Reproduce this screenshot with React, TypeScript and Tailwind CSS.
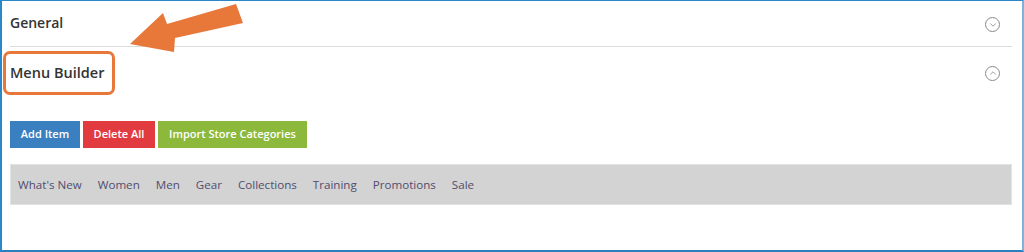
import { ChevronDown, ChevronUp } from 'lucide-react'

const menuItems = ['What\'s New', 'Women', 'Men', 'Gear', 'Collections', 'Training', 'Promotions', 'Sale']

function CircleChevron({ up }: { up?: boolean }) {
  return (
    <span className="flex h-[15px] w-[15px] items-center justify-center rounded-full border border-[#8a8a8a] text-[#8a8a8a]">
      {up ? <ChevronUp size={10} strokeWidth={2} /> : <ChevronDown size={10} strokeWidth={2} />}
    </span>
  )
}

export default function App() {
  return (
    <div className="relative h-[252px] w-[1024px] overflow-hidden bg-white font-['Open_Sans',sans-serif]">
      <div className="h-[252px] border-t border-l-2 border-b-2 border-r-2 border-t-[#2a87c8] border-l-[#2a87c8] border-b-[#2a7fbf] border-r-[#7ab4dc] pl-2 pr-[10px]">
        <div className="flex h-[46px] items-center justify-between border-b border-[#dcdcdc]">
          <h2 className="-mt-[2px] text-[14px] font-semibold text-[#333]">General</h2>
          <span className="mr-[12px] mt-[2px]">
            <CircleChevron />
          </span>
        </div>

        <div className="flex h-[50px] items-center justify-between">
          <div className="-ml-[7px] mt-[2px] flex h-[44px] items-center rounded-[7px] border-[3px] border-[#e8773a] pl-[4px] pr-[8px]">
            <h2 className="-mt-[1px] text-[14.5px] font-semibold text-[#333]">Menu Builder</h2>
          </div>
          <span className="mr-[12px] mt-[2px]">
            <CircleChevron up />
          </span>
        </div>

        <div className="mt-[24px] flex gap-[3px]">
          <button className="h-[27px] w-[70px] bg-[#3a7fbf] text-[11px] font-semibold text-white">Add Item</button>
          <button className="h-[27px] w-[72px] bg-[#e23b3f] text-[11px] font-semibold text-white">Delete All</button>
          <button className="h-[27px] w-[149px] bg-[#8cb83c] text-[11px] font-semibold text-white">Import Store Categories</button>
        </div>

        <div className="mt-[16px] flex h-[41px] items-center gap-[16px] border border-[#e2e2e2] bg-[#d3d3d3] pl-[7px]">
          {menuItems.map((item) => (
            <span key={item} className="text-[11.6px] text-[#514d6e]">
              {item}
            </span>
          ))}
        </div>
      </div>

      <svg className="absolute left-0 top-0" width="260" height="60" viewBox="0 0 260 60">
        <polygon
          points="130,44 163,13 167,24 236,4 243,23 175,38 174,52"
          fill="#e8773a"
        />
      </svg>
    </div>
  )
}
